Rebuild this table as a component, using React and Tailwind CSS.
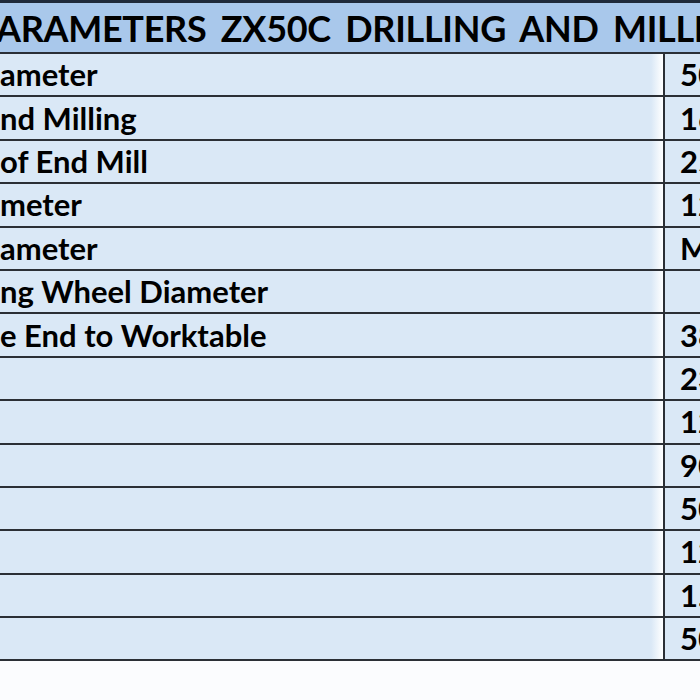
import React from 'react';

const rows = [
  { label: 'ameter', value: '50' },
  { label: 'nd Milling', value: '16' },
  { label: 'of End Mill', value: '25' },
  { label: 'meter', value: '12' },
  { label: 'ameter', value: 'M' },
  { label: 'ng Wheel Diameter', value: '' },
  { label: 'e End to Worktable', value: '38' },
  { label: '', value: '23' },
  { label: '', value: '12' },
  { label: '', value: '90' },
  { label: '', value: '50' },
  { label: '', value: '12' },
  { label: '', value: '1.' },
  { label: '', value: '50' },
];

export default function App() {
  return (
    <div
      className="w-[700px] h-[700px] overflow-hidden bg-[#fbfcfe] text-black"
      style={{ fontFamily: 'Lato, "Open Sans", sans-serif' }}
    >
      {/* Title bar */}
      <div className="h-[54px] bg-[#a9c8eb] border-t-[3px] border-b-2 border-t-[#1f2a3a] border-b-[#2a2f36] flex items-center overflow-hidden whitespace-nowrap">
        <span className="-ml-[4px] text-[36px] font-bold leading-none tracking-[-0.3px] [word-spacing:6px]">
          ARAMETERS ZX50C DRILLING AND MILLING
        </span>
      </div>

      {/* Spec rows */}
      {rows.map((row, i) => (
        <div
          key={i}
          className="h-[43.4px] flex border-b-2 border-[#2b2f35] bg-[#dae8f6]"
        >
          <div className="flex-1 flex items-center overflow-hidden whitespace-nowrap">
            <span className="text-[31px] font-bold leading-none">
              {row.label}
            </span>
          </div>
          <div className="w-[12px] bg-gradient-to-r from-[#dae8f6] to-white" />
          <div className="w-[37px] border-l-2 border-[#2b2f35] flex items-center pl-[15px] overflow-hidden whitespace-nowrap">
            <span className="text-[31px] font-bold leading-none">{row.value}</span>
          </div>
        </div>
      ))}
    </div>
  );
}
